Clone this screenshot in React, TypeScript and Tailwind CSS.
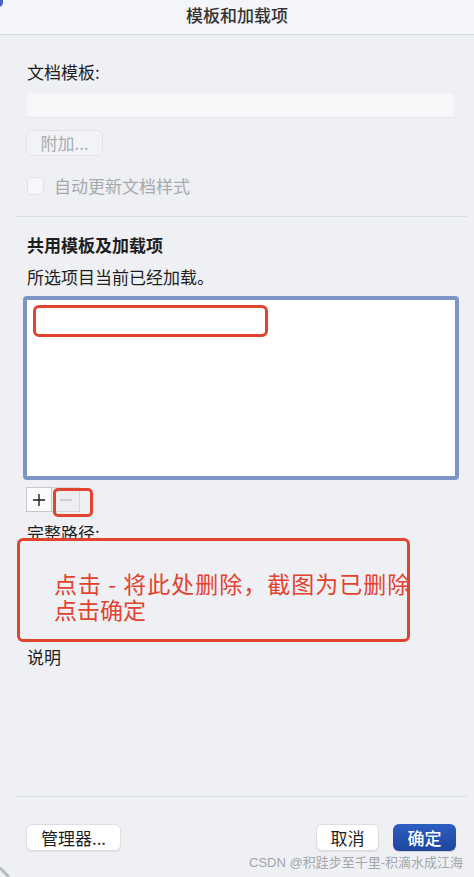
import React from 'react';

const cjk = "font-['Noto_Sans_CJK_SC','Noto_Sans',sans-serif]";

function PlusIcon() {
	return (
		<svg width="14" height="14" viewBox="0 0 14 14" fill="none">
			<path d="M7 1v12M1 7h12" stroke="#1d1d1f" strokeWidth="1.4" />
		</svg>
	);
}

function MinusIcon() {
	return (
		<svg width="14" height="14" viewBox="0 0 14 14" fill="none">
			<path d="M1 7h12" stroke="#b9bbc0" strokeWidth="1.2" />
		</svg>
	);
}

export default function App() {
	return (
		<div className={`relative flex h-[877px] w-[474px] flex-col overflow-hidden bg-[#eef0f4] text-[#1e1e1e] ${cjk}`}>
			{/* window corner marks */}
			<div className="absolute left-[-6px] top-[-7px] h-[14px] w-[9px] rounded-full bg-[#4565c6]" />
			<svg className="absolute bottom-0 left-0" width="10" height="10" viewBox="0 0 10 10">
				<path d="M0 1l9 9" stroke="#b7babf" strokeWidth="3" />
			</svg>

			{/* title bar */}
			<div className="flex h-[35px] shrink-0 items-center justify-center border-b border-[#d6d9de] bg-[#f3f5f8] pb-[5px]">
				<span className="text-[17px] font-medium leading-[24px] text-[#333]">模板和加载项</span>
			</div>

			<div className="flex flex-1 flex-col pl-[16px] pr-[7px]">
				{/* document template */}
				<div className="flex flex-col pl-[11px]">
					<div className="mt-[25px] text-[17px] leading-[24px]">文档模板:</div>
					<div className="mt-[9px] h-[25px] w-[427px] rounded-[3px] border-b border-[#e3e5e9] bg-[#f6f7f9]" />
					<button
						type="button"
						className="ml-[-1px] mt-[12px] flex h-[26px] w-[77px] items-center justify-center rounded-[6px] border border-[#e1e3e7] bg-[#f2f3f6] text-[17px] leading-[24px] text-[#a9acb1]"
					>
						附加...
					</button>
					<label className="mt-[21px] flex h-[18px] items-center gap-[10px]">
						<span className="h-[18px] w-[17px] rounded-[4px] border border-[#e0e2e6] bg-[#f6f7f9]" />
						<span className="text-[17px] leading-[24px] text-[#a6a9ae]">自动更新文档样式</span>
					</label>
				</div>

				<div className="mt-[21px] h-px bg-[#d8dbe0]" />

				{/* shared templates */}
				<div className="flex flex-col pl-[11px]">
					<div className="mt-[16px] text-[17px] font-bold leading-[24px]">共用模板及加载项</div>
					<div className="mt-[8px] text-[17px] leading-[24px]">所选项目当前已经加载。</div>

					<div className="ml-[-4px] mt-[7px] h-[184px] w-[436px] rounded-[4px] border-[4px] border-[#7d94c7] bg-white pl-[6px] pt-[5px]">
						<div className="h-[32px] w-[235px] rounded-[6px] border-[3px] border-[#e2432f]" />
					</div>

					<div className="relative ml-[-1px] mt-[7px] flex h-[25px]">
						<button type="button" className="flex h-[25px] w-[26px] items-center justify-center border border-[#c6c8cd] bg-[#fbfbfc]">
							<PlusIcon />
						</button>
						<button type="button" className="flex h-[25px] w-[28px] items-center justify-center border border-l-0 border-[#d4d6da] bg-[#eceef1]">
							<MinusIcon />
						</button>
						<div className="absolute left-[27px] top-[1px] h-[29px] w-[40px] rounded-[5px] border-[3px] border-[#e2432f]" />
					</div>

					<div className="relative mt-[9px] flex flex-col">
						<div className="text-[17px] leading-[24px]">完整路径:</div>
						<div className="h-[100px]" />
						<div className="text-[17px] leading-[24px]">说明</div>

						<div className="absolute left-[-10px] top-[17px] h-[104px] w-[393px] rounded-[6px] border-[3px] border-[#e2432f] bg-[#eef0f4] pl-[34px] pt-[29px]">
							<p className="whitespace-nowrap text-[23px] leading-[26px] text-[#e2432f]">
								<span className="tracking-[1px]">点击 - 将此处删除，截图为已删除</span>
								<br />
								点击确定
							</p>
						</div>
					</div>
				</div>

				{/* footer */}
				<div className="mt-auto flex flex-col pb-[6px]">
					<div className="h-px bg-[#d8dbe0]" />
					<div className="mt-[27px] flex h-[27px] items-center justify-between pl-[10px] pr-[11px]">
						<button
							type="button"
							className="h-[27px] w-[95px] rounded-[6px] border border-[#dcdee2] bg-white text-[17px] leading-[24px] shadow-[0_1px_1px_rgba(0,0,0,0.08)]"
						>
							管理器...
						</button>
						<div className="flex gap-[14px]">
							<button
								type="button"
								className="h-[27px] w-[63px] rounded-[6px] border border-[#dcdee2] bg-white text-[17px] leading-[24px] shadow-[0_1px_1px_rgba(0,0,0,0.08)]"
							>
								取消
							</button>
							<button
								type="button"
								className="h-[27px] w-[63px] rounded-[6px] bg-linear-to-b from-[#2d5ec2] to-[#1d459e] text-[17px] font-medium leading-[24px] text-white shadow-[0_1px_1px_rgba(0,0,0,0.15)]"
							>
								确定
							</button>
						</div>
					</div>
					<div className="mt-[4px] flex justify-end pr-[4px]">
						<span className="font-['Liberation_Sans','Noto_Sans_CJK_SC',sans-serif] text-[13px] leading-[16px] text-[#a3a6ab]">
							CSDN @积跬步至千里-积滴水成江海
						</span>
					</div>
				</div>
			</div>
		</div>
	);
}
